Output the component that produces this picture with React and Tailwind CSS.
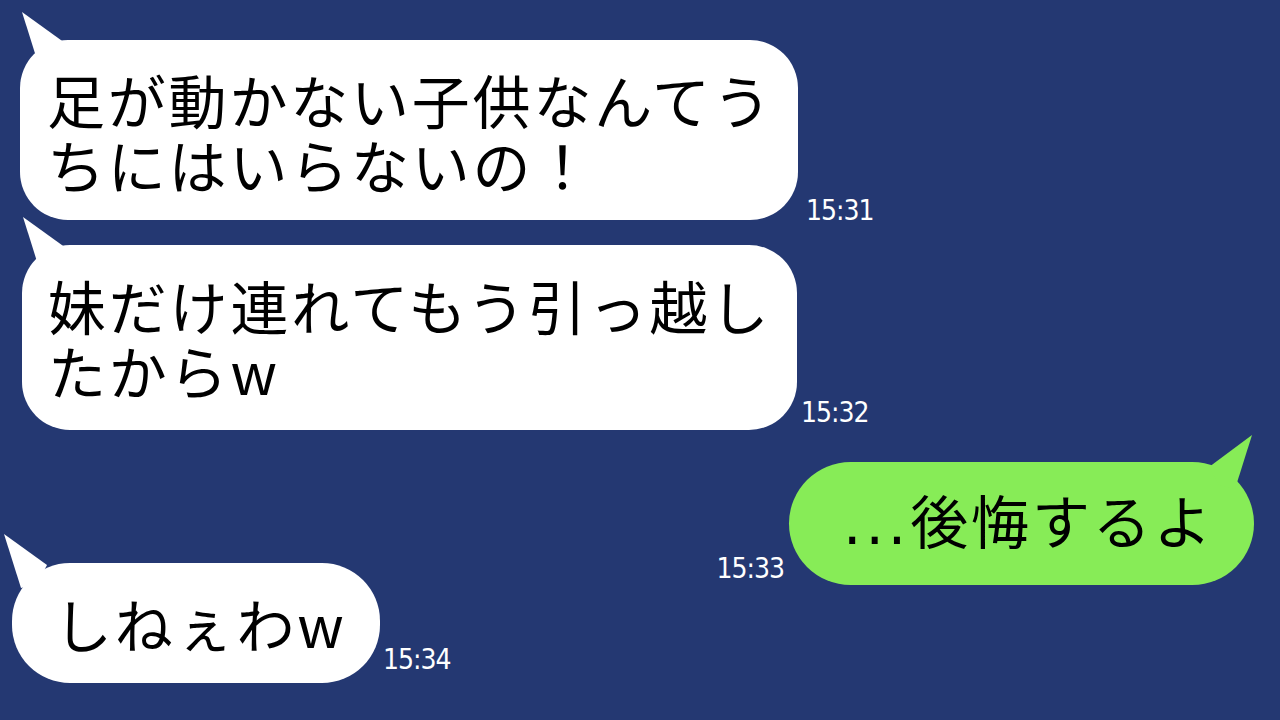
import React from 'react';

const jp = { fontFamily: '"Noto Sans CJK JP", "Noto Sans", sans-serif' };
const timeFont = { fontFamily: '"DejaVu Sans Condensed", "DejaVu Sans", sans-serif' };

function Time({ children, className = '' }) {
  return (
    <div
      className={`text-white text-[28px] leading-none tracking-[-1px] font-stretch-condensed ${className}`}
      style={timeFont}
    >
      {children}
    </div>
  );
}

// tail pointing up-left, drawn over the bubble's top-left corner
function LeftTail({ fill = '#ffffff', className = '' }) {
  return (
    <svg className={`absolute ${className}`} width="50" height="56" viewBox="0 0 50 56">
      <polygon points="1,0 44,31 34,50 18,54" fill={fill} />
    </svg>
  );
}

function RightTail({ fill, className = '' }) {
  return (
    <svg className={`absolute ${className}`} width="50" height="56" viewBox="0 0 50 56">
      <polygon points="49,0 6,32 16,50 32,54" fill={fill} />
    </svg>
  );
}

export default function App() {
  return (
    <div className="w-[1280px] h-[720px] bg-[#243872] overflow-hidden flex flex-col pt-[40px]" style={jp}>
      {/* message 1 */}
      <div className="flex items-end gap-2 pl-[20px]">
        <div className="relative w-[778px] h-[180px] rounded-[48px] bg-white pl-[27px] flex flex-col justify-center">
          <LeftTail className="left-[1px] top-[-28px]" />
          <div className="relative text-black text-[58px] leading-[65px] tracking-[2.8px] pt-[4px]">
            <div>足が動かない子供なんてう</div>
            <div>ちにはいらないの！</div>
          </div>
        </div>
        <Time className="mb-[-5px]">15:31</Time>
      </div>

      {/* message 2 */}
      <div className="flex items-end gap-[4px] pl-[22px] mt-[25px]">
        <div className="relative w-[775px] h-[185px] rounded-[48px] bg-white pl-[26px] flex flex-col justify-center">
          <LeftTail className="left-[0px] top-[-28px]" />
          <div className="relative text-black text-[58px] leading-[65px] tracking-[2.8px]">
            <div>妹だけ連れてもう引っ越し</div>
            <div>たからw</div>
          </div>
        </div>
        <Time className="mb-[3px]">15:32</Time>
      </div>

      {/* message 3 (mine) */}
      <div className="flex items-end justify-end gap-[5px] pr-[26px] mt-[32px]">
        <Time className="mb-[2px]">15:33</Time>
        <div className="relative w-[465px] h-[123px] rounded-[62px] bg-[#87ec57] pl-[54px] flex items-center">
          <RightTail fill="#87ec57" className="right-[1px] top-[-27px]" />
          <div className="relative text-black text-[58px] leading-none tracking-[2.8px] mt-[-4px]">
            <span style={{ fontFamily: '"DejaVu Sans", sans-serif' }} className="tracking-[4px]">...</span>
            後悔するよ
          </div>
        </div>
      </div>

      {/* message 4 */}
      <div className="flex items-end gap-[3px] pl-[12px] mt-[-22px]">
        <div className="relative w-[368px] h-[120px] rounded-[58px] bg-white pl-[42px] flex items-center">
          <LeftTail className="left-[-9px] top-[-29px]" />
          <div className="relative text-black text-[58px] leading-none tracking-[2.8px]">しねぇわw</div>
        </div>
        <Time className="mb-[9px]">15:34</Time>
      </div>
    </div>
  );
}
